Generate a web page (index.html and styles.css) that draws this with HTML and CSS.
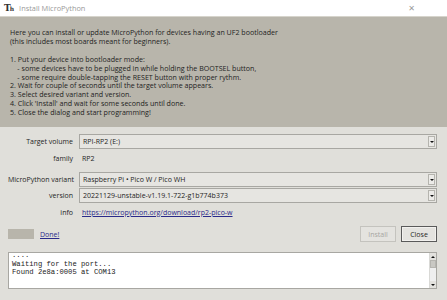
FILE: index.html
```html
<!DOCTYPE html>
<html lang="en">
<head>
  <meta charset="UTF-8">
  <title>Install MicroPython</title>
  <link rel="stylesheet" href="styles.css">
</head>
<body>
  <div class="titlebar">
    <span class="logo">T<small>h</small></span>
    <span class="title">Install MicroPython</span>
    <span class="close-x">&#x2715;</span>
  </div>

  <div class="intro">
    <p>Here you can install or update MicroPython for devices having an UF2 bootloader<br>
    (this includes most boards meant for beginners).</p>
    <p>1. Put your device into bootloader mode:<br>
    &nbsp;&nbsp;&nbsp;&nbsp;- some devices have to be plugged in while holding the BOOTSEL button,<br>
    &nbsp;&nbsp;&nbsp;&nbsp;- some require double-tapping the RESET button with proper rythm.<br>
    2. Wait for couple of seconds until the target volume appears.<br>
    3. Select desired variant and version.<br>
    4. Click 'Install' and wait for some seconds until done.<br>
    5. Close the dialog and start programming!</p>
  </div>

  <div class="form">
    <div class="row row-combo first">
      <label>Target volume</label>
      <div class="combo"><span>RPI-RP2 (E:)</span><i class="arrow"></i></div>
    </div>
    <div class="row row-text">
      <label>family</label>
      <span>RP2</span>
    </div>
    <div class="row row-combo spaced">
      <label>MicroPython variant</label>
      <div class="combo"><span>Raspberry Pi • Pico W / Pico WH</span><i class="arrow"></i></div>
    </div>
    <div class="row row-combo">
      <label>version</label>
      <div class="combo"><span>20221129-unstable-v1.19.1-722-g1b774b373</span><i class="arrow"></i></div>
    </div>
    <div class="row row-text">
      <label>info</label>
      <a href="#">https://micropython.org/download/rp2-pico-w</a>
    </div>
  </div>

  <div class="actions">
    <div class="progress"></div>
    <a href="#" class="done">Done!</a>
    <div class="spacer"></div>
    <button class="btn" disabled>Install</button>
    <button class="btn btn-default">Close</button>
  </div>

  <div class="log">
    <pre>....
Waiting for the port...
Found 2e8a:0005 at COM13</pre>
    <div class="scrollbar">
      <i class="sb-up"></i>
      <i class="sb-thumb"></i>
      <i class="sb-track"></i>
      <i class="sb-down"></i>
    </div>
  </div>
</body>
</html>
```

FILE: styles.css
```css
:root {
  --band: #b8b5ab;
  --bg: #e0dfda;
  --text: #1e1e1e;
  --link: #2a2a8a;
}

* {
  margin: 0;
  padding: 0;
  box-sizing: border-box;
}

body {
  width: 447px;
  height: 300px;
  overflow: hidden;
  background: var(--bg);
  font-family: 'Open Sans', 'Noto Sans', sans-serif;
  font-size: 7px;
  color: var(--text);
}

.titlebar {
  height: 17px;
  background: #ffffff;
  display: flex;
  align-items: center;
  padding: 0 4px 0 4px;
  gap: 6px;
  border-bottom: 1px solid #d6d4cc;
}

.titlebar .logo {
  font-family: 'DejaVu Serif', serif;
  font-weight: bold;
  font-size: 9px;
  color: #333;
  letter-spacing: -1px;
}

.titlebar .logo small {
  font-size: 6px;
}

.titlebar .title {
  color: #9a9a9a;
  font-size: 7.4px;
  flex: 1;
}

.titlebar .close-x {
  color: #9a9a9a;
  font-size: 8px;
  margin-right: 28px;
  font-family: 'DejaVu Sans', sans-serif;
}

.intro {
  background: var(--band);
  padding: 11px 10px 9px;
  line-height: 8.9px;
  height: 110px;
  font-size: 7.1px;
}

.intro p + p {
  margin-top: 8.9px;
}

.form {
  padding: 0 10px 0 8px;
}

.row {
  display: flex;
  align-items: center;
  gap: 6px;
}

.row label {
  width: 65px;
  text-align: right;
  flex-shrink: 0;
  white-space: nowrap;
}

.row-combo {
  height: 15px;
  margin-top: 1px;
}

.row-combo.first {
  margin-top: 7px;
}

.row-combo.spaced {
  margin-top: 6px;
}

.row-text {
  height: 16px;
  margin-top: 1px;
}

.row-text span {
  padding-left: 3px;
}

.row-text a {
  color: var(--link);
  padding-left: 3px;
}

.combo {
  flex: 1;
  height: 100%;
  border: 1px solid #a8a7a2;
  background: #e6e5e1;
  display: flex;
  align-items: center;
  padding-left: 3px;
}

.combo span {
  flex: 1;
}

.combo .arrow {
  width: 7px;
  height: 11px;
  margin-right: 1px;
  border: 1px solid #b5b4ae;
  background: #ecebe8;
  display: flex;
  align-items: center;
  justify-content: center;
}

.combo .arrow::after {
  content: '';
  border-left: 2px solid transparent;
  border-right: 2px solid transparent;
  border-top: 2px solid #111;
}

.actions {
  display: flex;
  align-items: center;
  padding: 0 10px 0 8px;
  margin-top: 6px;
  height: 16px;
}

.progress {
  width: 26px;
  height: 10px;
  background: var(--band);
}

.done {
  color: var(--link);
  margin-left: 6px;
}

.spacer {
  flex: 1;
}

.btn {
  width: 36px;
  height: 16px;
  font-family: inherit;
  font-size: 7px;
  background: #e4e3df;
  border: 1px solid #c4c3be;
  color: #a6a5a1;
}

.btn-default {
  margin-left: 5px;
  color: var(--text);
  border: 1px solid #5a5a5a;
  box-shadow: inset 0 0 0 1px #f2f1ee;
}

.log {
  margin: 10px 10px 0 8px;
  height: 37px;
  background: #ffffff;
  border: 1px solid #a8a7a2;
  display: flex;
  overflow: hidden;
}

.log pre {
  flex: 1;
  font-family: 'Liberation Mono', monospace;
  font-size: 7.2px;
  line-height: 8.5px;
  padding-left: 3px;
  margin-top: -2px;
  color: #222;
}

.scrollbar {
  width: 7px;
  display: flex;
  flex-direction: column;
  background: #efefef;
  border-left: 1px solid #d9d9d6;
}

.scrollbar i {
  display: block;
}

.sb-up, .sb-down {
  height: 7px;
  display: flex !important;
  align-items: center;
  justify-content: center;
  background: #e3e2de;
}

.sb-up::after {
  content: '';
  border-left: 2px solid transparent;
  border-right: 2px solid transparent;
  border-bottom: 2px solid #111;
}

.sb-down::after {
  content: '';
  border-left: 2px solid transparent;
  border-right: 2px solid transparent;
  border-top: 2px solid #111;
}

.sb-thumb {
  height: 8px;
  background: #c9c8c3;
  border: 1px solid #b6b5b0;
}

.sb-track {
  flex: 1;
}
```
